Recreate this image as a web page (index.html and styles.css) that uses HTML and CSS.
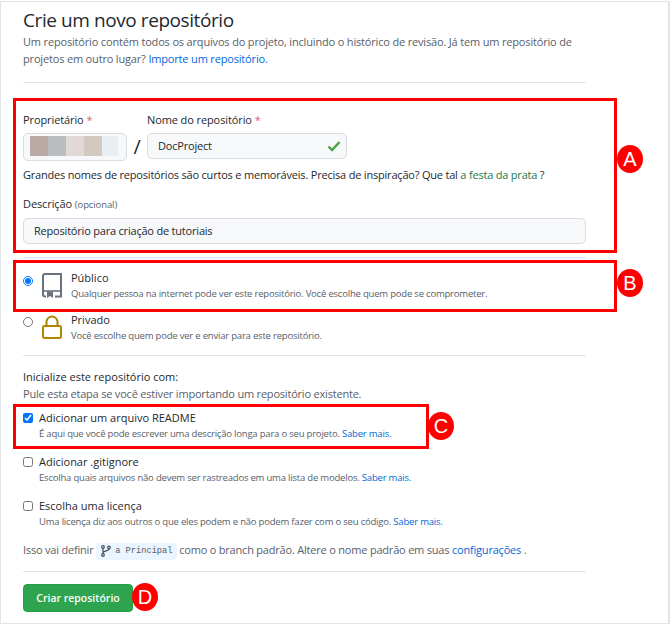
FILE: index.html
```html
<!DOCTYPE html>
<html lang="en">

<head>
    <meta charset="UTF-8">
    <meta name="viewport" content="width=device-width, initial-scale=1.0">
    <title>Crie um novo repositório</title>
    <link rel="stylesheet" href="styles.css">
</head>

<body>
    <div class="frame">
        <div class="container">
            <div class="heading">
                <h1>Crie um novo repositório</h1>
                <p>Um repositório contém todos os arquivos do projeto, incluindo o histórico de revisão. Já tem um repositório de projetos em outro lugar? <a href="#">Importe um repositório.</a></p>
            </div>
            <hr class="rule rule-top">

            <div class="owner-row">
                <div class="owner-field">
                    <label>Proprietário <span class="req">*</span></label>
                    <div class="owner-select">
                        <span class="blur b1"></span><span class="blur b2"></span><span class="blur b3"></span><span class="blur b4"></span><span class="blur b5"></span>
                    </div>
                </div>
                <span class="slash">/</span>
                <div class="name-field">
                    <label>Nome do repositório <span class="req">*</span></label>
                    <div class="input name-input">
                        <span>DocProject</span>
                        <svg class="check" width="14" height="12" viewBox="0 0 14 12"><path d="M1.5 6.5l3.6 3.6L12.5 2" fill="none" stroke="#4aa345" stroke-width="2.4"/></svg>
                    </div>
                </div>
            </div>
            <p class="hint">Grandes nomes de repositórios são curtos e memoráveis. Precisa de inspiração? Que tal <a class="teal" href="#">a festa da prata</a> ?</p>

            <label class="desc-label">Descrição <small>(opcional)</small></label>
            <div class="input desc-input">Repositório para criação de tutoriais</div>
            <hr class="rule rule-desc">

            <div class="option option-public">
                <input type="radio" name="vis" checked>
                <svg class="opt-icon" width="20" height="25" viewBox="0 0 20 25">
                    <path d="M3 1h16v22.5h-6M4 23.5H3a2 2 0 0 1-2-2V3a2 2 0 0 1 2-2" fill="none" stroke="#6a737d" stroke-width="2" />
                    <path d="M1.5 18H19" fill="none" stroke="#6a737d" stroke-width="1.6" />
                    <path d="M5 18.5h6V25l-3-2-3 2z" fill="#6a737d" />
                </svg>
                <div class="opt-text">
                    <strong>Público</strong>
                    <span>Qualquer pessoa na internet pode ver este repositório. Você escolhe quem pode se comprometer.</span>
                </div>
            </div>
            <div class="option option-private">
                <input type="radio" name="vis">
                <svg class="opt-icon" width="20" height="24" viewBox="0 0 20 24">
                    <path d="M4.5 11V7a5.5 5.5 0 0 1 11 0v4" fill="none" stroke="#b08800" stroke-width="2" />
                    <rect x="1" y="11" width="18" height="12" rx="1.5" fill="none" stroke="#b08800" stroke-width="2" />
                </svg>
                <div class="opt-text">
                    <strong>Privado</strong>
                    <span>Você escolhe quem pode ver e enviar para este repositório.</span>
                </div>
            </div>
            <hr class="rule rule-init">

            <div class="init-title">Inicialize este repositório com:</div>
            <div class="init-sub">Pule esta etapa se você estiver importando um repositório existente.</div>

            <div class="check-row check-first">
                <input type="checkbox" checked>
                <div class="opt-text">
                    <strong>Adicionar um arquivo README</strong>
                    <span>É aqui que você pode escrever uma descrição longa para o seu projeto. <a href="#">Saber mais.</a></span>
                </div>
            </div>
            <div class="check-row">
                <input type="checkbox">
                <div class="opt-text">
                    <strong>Adicionar .gitignore</strong>
                    <span>Escolha quais arquivos não devem ser rastreados em uma lista de modelos. <a href="#">Saber mais.</a></span>
                </div>
            </div>
            <div class="check-row">
                <input type="checkbox">
                <div class="opt-text">
                    <strong>Escolha uma licença</strong>
                    <span>Uma licença diz aos outros o que eles podem e não podem fazer com o seu código. <a href="#">Saber mais.</a></span>
                </div>
            </div>

            <p class="branch-line">Isso vai definir
                <span class="branch-pill">
                    <svg width="10" height="12" viewBox="0 0 10 12"><g fill="none" stroke="#444d56" stroke-width="1.2"><circle cx="2" cy="2" r="1.3"/><circle cx="2" cy="10" r="1.3"/><circle cx="8" cy="2.5" r="1.3"/><path d="M2 3.3v5.4M8 3.8c0 2.6-5.5 1.6-6 4"/></g></svg>
                    <code>a Principal</code>
                </span>
                como o branch padrão. Altere o nome padrão em suas <a href="#">configurações</a> .</p>
            <hr class="rule rule-bottom">

            <button class="create-btn">Criar repositório</button>
        </div>

        <!-- marcacoes do tutorial -->
        <div class="mark mark-a"></div>
        <div class="mark mark-b"></div>
        <div class="mark mark-c"></div>
        <span class="badge badge-a">A</span>
        <span class="badge badge-b">B</span>
        <span class="badge badge-c">C</span>
        <span class="badge badge-d">D</span>
    </div>
</body>

</html>
```

FILE: styles.css
```css
body {
    font-family: "Open Sans", Arial, sans-serif;
    margin: 0;
    padding: 0;
    background-color: #fff;
    color: #24292e;
    font-size: 11px;
    letter-spacing: -0.2px;
}

.frame {
    position: relative;
    width: 667px;
    height: 621px;
    margin-top: 1px;
    border: 1px solid #e4e4e4;
    border-right-width: 2px;
    border-left-width: 1px;
    background-color: #fff;
    overflow: hidden;
}

.container {
    width: 563px;
    margin-left: 22px;
}

a {
    color: #0366d6;
    text-decoration: none;
}

a.teal {
    color: #22794f;
}

h1 {
    margin: 0;
    padding-top: 5px;
    font-size: 19px;
    line-height: 26px;
    font-weight: 400;
    letter-spacing: -0.42px;
}

.heading p {
    margin: 0;
    font-size: 11px;
    line-height: 17px;
    letter-spacing: -0.17px;
    color: #586069;
}

.rule {
    border: 0;
    height: 1px;
    background-color: #e1e4e8;
    margin: 0;
}

.rule-top {
    margin-top: 15px;
}

.owner-row {
    display: flex;
    margin-top: 29px;
}

label {
    display: block;
    font-weight: 500;
    font-size: 11px;
    line-height: 16px;
    letter-spacing: -0.1px;
}

.req {
    color: #d9626c;
    font-weight: 400;
}

.owner-field {
    width: 104px;
}

.owner-select {
    display: flex;
    box-sizing: border-box;
    height: 28px;
    margin-top: 5px;
    padding: 2px 6px 0;
    align-items: flex-start;
    border: 1px solid #d9dce0;
    border-radius: 5px;
    background-color: #f6f8fa;
}

.blur {
    display: block;
    width: 18px;
    height: 20px;
}

.b1 { background-color: #bba9a5; }
.b2 { background-color: #b9bdc0; }
.b3 { background-color: #e0d9d8; }
.b4 { background-color: #d2c9bf; }
.b5 { background-color: #e9eef2; width: 16px; }

.slash {
    width: 20px;
    text-align: center;
    font-size: 20px;
    line-height: 26px;
    margin-top: 22px;
}

.name-field {
    width: 200px;
}

.input {
    box-sizing: border-box;
    height: 26px;
    border: 1px solid #d9dce0;
    border-radius: 5px;
    background-color: #f6f8fa;
    line-height: 24px;
    font-size: 11px;
    padding: 0 10px;
}

.name-input {
    display: flex;
    justify-content: space-between;
    align-items: center;
    margin-top: 5px;
    padding-right: 5px;
}

.hint {
    margin: 5px 0 0;
    line-height: 17px;
}

.desc-label {
    margin-top: 13px;
}

.desc-label small {
    font-size: 9.5px;
    font-weight: 400;
    color: #586069;
}

.desc-input {
    margin-top: 5px;
}

.rule-desc {
    margin-top: 13px;
}

.option {
    display: flex;
    align-items: flex-start;
}

.option input {
    width: 10px;
    height: 10px;
    margin: 3px 9px 0 0;
}

.opt-icon {
    display: block;
    flex-shrink: 0;
}

.opt-text strong {
    display: block;
    font-size: 11px;
    line-height: 16px;
    font-weight: 500;
    letter-spacing: 0;
}

.opt-text span {
    display: block;
    font-size: 9.5px;
    line-height: 16px;
    color: #586069;
}

.option .opt-text strong {
    line-height: 17px;
}

.option-public {
    margin-top: 15px;
}

.option .opt-text {
    margin: -4px 0 0 9px;
}

.option-private {
    margin-top: 13px;
}

.option-private input {
    margin-top: 2px;
}

.rule-init {
    margin-top: 11px;
}

.init-title {
    margin-top: 12px;
    line-height: 17px;
    font-weight: 500;
    letter-spacing: 0;
}

.init-sub {
    line-height: 17px;
    color: #586069;
}

.check-row {
    display: flex;
    margin-top: 12px;
}

.check-first {
    margin-top: 8px;
}

.check-row input {
    width: 10px;
    height: 10px;
    margin: 3px 6px 0 0;
}

.branch-line {
    margin: 10px 0 0;
    line-height: 20px;
    color: #586069;
}

.branch-pill {
    display: inline-flex;
    align-items: center;
    gap: 4px;
    height: 17px;
    padding: 0 4px 0 5px;
    vertical-align: middle;
    border-radius: 4px;
    background-color: #eaf5ff;
}

.branch-pill code {
    font-family: "Liberation Mono", monospace;
    font-size: 8.7px;
    letter-spacing: 0;
    color: #586069;
}

.rule-bottom {
    margin-top: 11px;
}

.create-btn {
    display: block;
    width: 110px;
    height: 28px;
    margin-top: 12px;
    border: 1px solid #279f43;
    border-radius: 4px;
    background-color: #2ea44f;
    color: #fff;
    font-family: inherit;
    font-size: 10.5px;
    font-weight: 600;
}

.mark {
    position: absolute;
    box-sizing: border-box;
    border: 3px solid #f00;
}

.mark-a {
    left: 12px;
    top: 96px;
    width: 604px;
    height: 155px;
}

.mark-b {
    left: 12px;
    top: 258px;
    width: 604px;
    height: 52px;
}

.mark-c {
    left: 12px;
    top: 402px;
    width: 416px;
    height: 45px;
}

.badge {
    position: absolute;
    width: 26px;
    height: 28px;
    border-radius: 50%;
    background-color: #f00;
    color: #fff;
    font-family: "Liberation Sans", Arial, sans-serif;
    font-size: 20px;
    line-height: 28px;
    letter-spacing: 0;
    text-align: center;
}

.badge-a { left: 616px; top: 143px; }
.badge-b { left: 616px; top: 267px; }
.badge-c { left: 427px; top: 410px; }
.badge-d { left: 131px; top: 581px; }
```
